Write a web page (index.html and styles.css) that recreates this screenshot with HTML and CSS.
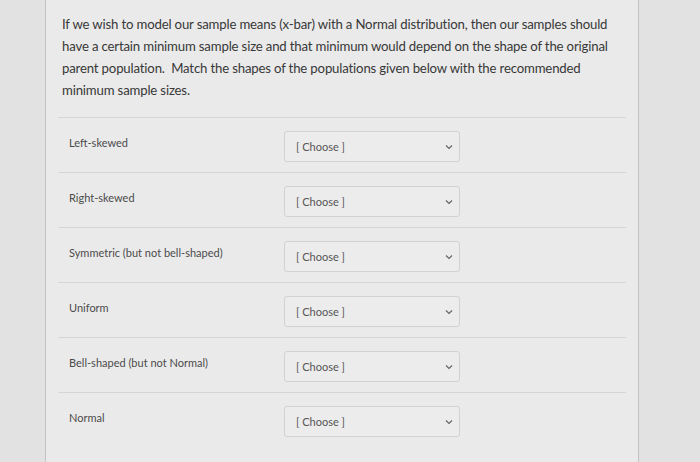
FILE: index.html
```html
<!DOCTYPE html>
<html lang="en">
<head>
    <meta charset="UTF-8">
    <meta name="viewport" content="width=device-width, initial-scale=1.0">
    <title>Matching Question</title>
    <link rel="stylesheet" href="styles.css">
</head>
<body>
    <div class="question">
        <p class="question-text">If we wish to model our sample means (x-bar) with a Normal distribution, then our samples should have a certain minimum sample size and that minimum would depend on the shape of the original parent population.&nbsp; Match the shapes of the populations given below with the recommended minimum sample sizes.</p>

        <div class="answers">
            <div class="answer">
                <div class="answer-label">Left-skewed</div>
                <div class="select">
                    <span>[ Choose ]</span>
                    <svg class="chevron" width="8" height="6" viewBox="0 0 8 6"><path d="M1 1.5 L4 4.5 L7 1.5" fill="none" stroke="#666" stroke-width="1.2"/></svg>
                </div>
            </div>
            <div class="answer">
                <div class="answer-label">Right-skewed</div>
                <div class="select">
                    <span>[ Choose ]</span>
                    <svg class="chevron" width="8" height="6" viewBox="0 0 8 6"><path d="M1 1.5 L4 4.5 L7 1.5" fill="none" stroke="#666" stroke-width="1.2"/></svg>
                </div>
            </div>
            <div class="answer">
                <div class="answer-label">Symmetric (but not bell-shaped)</div>
                <div class="select">
                    <span>[ Choose ]</span>
                    <svg class="chevron" width="8" height="6" viewBox="0 0 8 6"><path d="M1 1.5 L4 4.5 L7 1.5" fill="none" stroke="#666" stroke-width="1.2"/></svg>
                </div>
            </div>
            <div class="answer">
                <div class="answer-label">Uniform</div>
                <div class="select">
                    <span>[ Choose ]</span>
                    <svg class="chevron" width="8" height="6" viewBox="0 0 8 6"><path d="M1 1.5 L4 4.5 L7 1.5" fill="none" stroke="#666" stroke-width="1.2"/></svg>
                </div>
            </div>
            <div class="answer">
                <div class="answer-label">Bell-shaped (but not Normal)</div>
                <div class="select">
                    <span>[ Choose ]</span>
                    <svg class="chevron" width="8" height="6" viewBox="0 0 8 6"><path d="M1 1.5 L4 4.5 L7 1.5" fill="none" stroke="#666" stroke-width="1.2"/></svg>
                </div>
            </div>
            <div class="answer">
                <div class="answer-label">Normal</div>
                <div class="select">
                    <span>[ Choose ]</span>
                    <svg class="chevron" width="8" height="6" viewBox="0 0 8 6"><path d="M1 1.5 L4 4.5 L7 1.5" fill="none" stroke="#666" stroke-width="1.2"/></svg>
                </div>
            </div>
        </div>
    </div>
</body>
</html>
```

FILE: styles.css
```css
body {
    margin: 0;
    background-color: #e2e2e2;
    font-family: Lato, "Open Sans", sans-serif;
    color: #3a3a3a;
}
.question {
    margin-left: 45px;
    width: 594px;
    min-height: 462px;
    box-sizing: border-box;
    background-color: #eaeaea;
    border-left: 1px solid #c2c2c2;
    border-right: 1px solid #c2c2c2;
    padding-top: 13px;
}
.question-text {
    margin: 0 0 16px 0;
    padding: 0 14px 0 16px;
    font-size: 13.2px;
    letter-spacing: -0.17px;
    line-height: 22px;
    color: #383838;
}
.answers {
    margin: 0 12px;
}
.answer {
    display: flex;
    align-items: flex-start;
    border-top: 1px solid #d5d5d5;
    padding: 13px 0 10px 0;
}
.answer-label {
    width: 215px;
    padding-left: 11px;
    margin-top: 5px;
    font-size: 11px;
    color: #4a4a4a;
}
.select {
    width: 176px;
    height: 31px;
    box-sizing: border-box;
    display: flex;
    align-items: center;
    justify-content: space-between;
    padding: 0 6px 0 11px;
    background-color: #ececec;
    border: 1px solid #d2d2d2;
    border-radius: 3px;
    font-size: 11px;
    color: #555;
}
```
